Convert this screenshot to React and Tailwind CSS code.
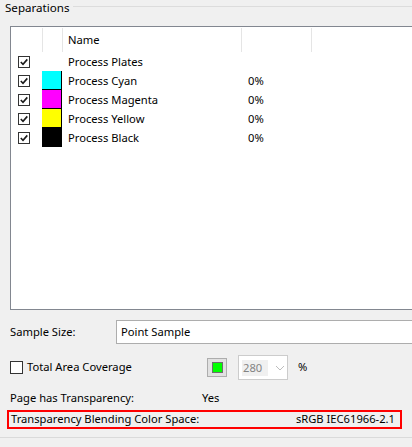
import React from 'react';

const plates = [
    { name: 'Process Plates', color: null, pct: '' },
    { name: 'Process Cyan', color: 'bg-[#00ffff]', pct: '0%' },
    { name: 'Process Magenta', color: 'bg-[#ff00ff]', pct: '0%' },
    { name: 'Process Yellow', color: 'bg-[#ffff00]', pct: '0%' },
    { name: 'Process Black', color: 'bg-[#000000]', pct: '0%' },
];

function Check({ checked, className = '' }) {
    return (
        <div className={`w-[12px] h-[12px] border border-[#333333] bg-white flex items-center justify-center ${className}`}>
            {checked && (
                <svg width="10" height="10" viewBox="0 0 10 10">
                    <path d="M1.8 5 L4 7.3 L8.3 2.4" fill="none" stroke="#1a1a1a" strokeWidth="1.6" />
                </svg>
            )}
        </div>
    );
}

export default function App() {
    return (
        <div className="w-[412px] h-[447px] overflow-hidden bg-[#f0f0f0] text-[11.2px] text-black font-['Segoe_UI','Noto_Sans',sans-serif] flex flex-col">
            {/* group box caption */}
            <div className="h-[16px] flex items-start">
                <span className="pl-[5px] pr-[3px] leading-[16px] text-[11.6px]">Separations</span>
                <div className="flex-1 mt-[6px] border-t border-[#dcdcdc]" />
            </div>

            {/* plate list */}
            <div className="mt-[10px] ml-[10px] w-[420px] h-[284px] shrink-0 border border-[#828790] bg-white">
                <div className="h-[25px] flex">
                    <div className="w-[32px] h-[24px] mt-[1px] border-r border-[#e5e5e5]" />
                    <div className="w-[20px] h-[24px] mt-[1px] border-r border-[#e5e5e5]" />
                    <div className="w-[179px] h-[24px] mt-[1px] border-r border-[#e5e5e5] pl-[5px] flex items-center">Name</div>
                    <div className="w-[70px] h-[24px] mt-[1px] border-r border-[#e5e5e5]" />
                </div>
                {plates.map((p) => (
                    <div key={p.name} className="h-[19px] flex items-center">
                        <div className="w-[31px] pl-[7px]">
                            <Check checked />
                        </div>
                        <div className={`w-[20px] h-full ${p.color ? `${p.color} border-r border-b border-black` : ''}`} />
                        <div className="w-[179px] pl-[6px] leading-[19px]">{p.name}</div>
                        <div className="pl-[7px] leading-[19px]">{p.pct}</div>
                    </div>
                ))}
            </div>

            {/* sample size */}
            <div className="mt-[10px] h-[24px] flex items-center">
                <div className="w-[116px] shrink-0 pl-[10px]">Sample Size:</div>
                <div className="w-[330px] shrink-0 h-full border border-[#adadad] bg-white pl-[4px] flex items-center">Point Sample</div>
            </div>

            {/* total area coverage */}
            <div className="mt-[11px] h-[25px] flex items-center pl-[10px]">
                <div className="w-[197px] flex items-center">
                    <div className="w-[13px] h-[13px] border border-[#333333] bg-white" />
                    <span className="ml-[4px]">Total Area Coverage</span>
                </div>
                <div className="w-[20px] h-[19px] border border-[#adadad] bg-[#e1e1e1] flex items-center justify-center">
                    <div className="w-[11px] h-[11px] bg-[#00ff00] border border-[#6d6d6d]" />
                </div>
                <div className="ml-[11px] w-[50px] h-[25px] border border-[#cccccc] bg-white flex items-center">
                    <span className="ml-[3px] px-[1px] w-[26px] bg-[#f0f0f0] text-[#838383] leading-[16px]">280</span>
                    <svg className="ml-[7px]" width="10" height="6" viewBox="0 0 10 6">
                        <path d="M1 1 L5 5 L9 1" fill="none" stroke="#bdbdbd" strokeWidth="1" />
                    </svg>
                </div>
                <span className="ml-[10px]">%</span>
            </div>

            {/* transparency */}
            <div className="mt-[10px] h-[16px] flex items-center pl-[10px]">
                <div className="w-[192px]">Page has Transparency:</div>
                <div>Yes</div>
            </div>

            <div className="mt-[4px] ml-[7px] w-[395px] h-[19px] shrink-0 border-2 border-[#ff0000] flex items-center justify-between pl-[2px] pr-[5px]">
                <span>Transparency Blending Color Space:</span>
                <span>sRGB IEC61966-2.1</span>
            </div>

            <div className="mt-[8px] border-t border-[#dadada]" />
        </div>
    );
}
